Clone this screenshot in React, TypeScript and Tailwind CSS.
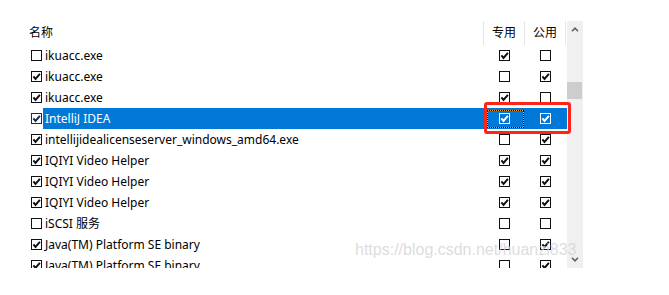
import type { ReactNode } from "react";

type Row = { name: string; on: boolean; priv: boolean; pub: boolean; selected?: boolean };

const rows: Row[] = [
  { name: "ikuacc.exe", on: false, priv: true, pub: false },
  { name: "ikuacc.exe", on: true, priv: false, pub: true },
  { name: "ikuacc.exe", on: true, priv: true, pub: false },
  { name: "IntelliJ IDEA", on: true, priv: true, pub: true, selected: true },
  { name: "intellijidealicenseserver_windows_amd64.exe", on: true, priv: false, pub: true },
  { name: "IQIYI Video Helper", on: true, priv: true, pub: true },
  { name: "IQIYI Video Helper", on: true, priv: true, pub: true },
  { name: "IQIYI Video Helper", on: true, priv: true, pub: true },
  { name: "iSCSI 服务", on: false, priv: false, pub: false },
  { name: "Java(TM) Platform SE binary", on: true, priv: false, pub: true },
  { name: "Java(TM) Platform SE binary", on: true, priv: false, pub: true },
];

function Box({ checked, tone = "normal" }: { checked: boolean; tone?: "normal" | "inverse" | "navy" }) {
  const border =
    tone === "inverse" ? "border-white" : tone === "navy" ? "border-[#0f2d4c] bg-white" : "border-[#111] bg-white";
  const stroke = tone === "inverse" ? "#ffffff" : tone === "navy" ? "#0f2d4c" : "#111111";
  return (
    <span className={`flex w-[11px] h-[11px] shrink-0 border ${border}`}>
      {checked && (
        <svg width="9" height="9" viewBox="0 0 9 9" fill="none">
          <polyline points="1.4,4.4 3.5,6.9 7.9,1.9" stroke={stroke} strokeWidth="2" />
        </svg>
      )}
    </span>
  );
}

function Cell({ children, focus }: { children: ReactNode; focus?: boolean }) {
  return (
    <div className="relative w-[41px] h-full flex items-center justify-center">
      {focus && (
        <>
          <span className="absolute left-[3px] top-[2px] right-[1px] bottom-[1px] border border-[#ff9a2e]" />
          <span className="absolute left-[3px] top-[2px] right-[1px] bottom-[1px] border border-dotted border-black" />
        </>
      )}
      {children}
    </div>
  );
}

function Chevron({ up }: { up?: boolean }) {
  return (
    <svg width="8" height="5" viewBox="0 0 8 5" fill="none">
      <polyline
        points={up ? "1,4.2 4,1.2 7,4.2" : "1,0.8 4,3.8 7,0.8"}
        stroke="#606060"
        strokeWidth="1.6"
      />
    </svg>
  );
}

export default function App() {
  return (
    <div
      className="relative w-[669px] h-[295px] overflow-hidden bg-white pt-[21px] pl-[24px]"
      style={{ fontFamily: '"Noto Sans", "Noto Sans CJK SC", sans-serif' }}
    >
      <div className="flex h-[247px]">
        <div className="w-[543px] flex flex-col overflow-hidden">
          <div className="flex h-[24px] shrink-0 text-[12px] text-black">
            <div className="w-[460px] border-r border-[#e5e5e5] pl-[5px] flex items-center">名称</div>
            <div className="w-[41px] border-r border-[#e5e5e5] flex items-center justify-center">专用</div>
            <div className="w-[41px] border-r border-[#e5e5e5] flex items-center justify-center">公用</div>
          </div>
          {rows.map((r, i) => (
            <div key={i} className="flex h-[21px] shrink-0 text-[12px]">
              <div className="w-[19px] pl-[7px] flex items-center">
                <Box checked={r.on} tone={r.selected ? "navy" : "normal"} />
              </div>
              <div className={`flex-1 flex items-center ${r.selected ? "bg-[#0078d7] text-white" : "text-black"}`}>
                <div className="w-[441px] pl-[2px] whitespace-nowrap">{r.name}</div>
                <Cell focus={r.selected}>
                  <Box checked={r.priv} tone={r.selected ? "inverse" : "normal"} />
                </Cell>
                <Cell>
                  <Box checked={r.pub} tone={r.selected ? "inverse" : "normal"} />
                </Cell>
              </div>
            </div>
          ))}
        </div>
        <div className="w-[16px] bg-[#f0f0f0] flex flex-col">
          <div className="h-[17px] flex items-center justify-center">
            <Chevron up />
          </div>
          <div className="flex-1">
            <div className="mt-[44px] w-[15px] h-[17px] bg-[#cdcdcd]" />
          </div>
          <div className="h-[17px] flex items-center justify-center">
            <Chevron />
          </div>
        </div>
      </div>

      <div className="absolute left-[484px] top-[102px] w-[87px] h-[32px] border-[3px] border-[#ff2418] rounded-[3px]" />

      <div
        className="absolute left-[355px] top-[240px] text-[16px] leading-[20px] text-[#d4d4d4]/80 whitespace-nowrap"
        style={{ fontFamily: '"Liberation Sans", Arial, sans-serif' }}
      >
        https://blog.csdn.net/huanzi833
      </div>
    </div>
  );
}
